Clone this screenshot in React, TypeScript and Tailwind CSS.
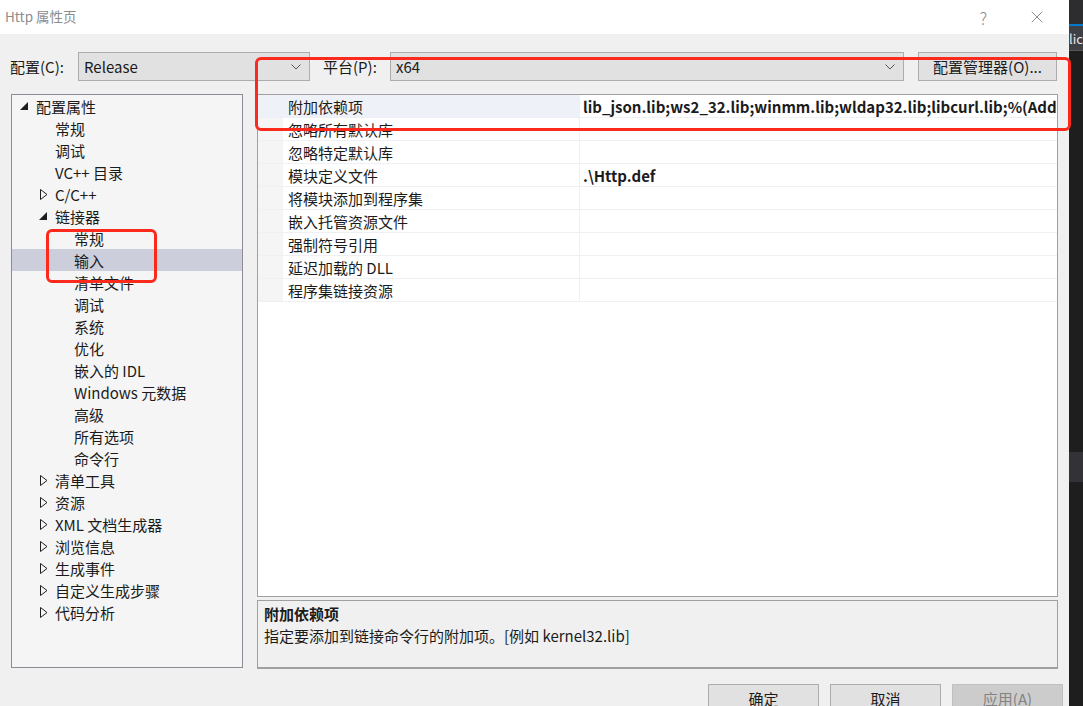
import React from "react";
import { X } from "lucide-react";

type TreeItem = {
  label: string;
  level: number;
  arrow?: "open" | "closed";
  selected?: boolean;
};

const treeItems: TreeItem[] = [
  { label: "配置属性", level: 0, arrow: "open" },
  { label: "常规", level: 1 },
  { label: "调试", level: 1 },
  { label: "VC++ 目录", level: 1 },
  { label: "C/C++", level: 1, arrow: "closed" },
  { label: "链接器", level: 1, arrow: "open" },
  { label: "常规", level: 2 },
  { label: "输入", level: 2, selected: true },
  { label: "清单文件", level: 2 },
  { label: "调试", level: 2 },
  { label: "系统", level: 2 },
  { label: "优化", level: 2 },
  { label: "嵌入的 IDL", level: 2 },
  { label: "Windows 元数据", level: 2 },
  { label: "高级", level: 2 },
  { label: "所有选项", level: 2 },
  { label: "命令行", level: 2 },
  { label: "清单工具", level: 1, arrow: "closed" },
  { label: "资源", level: 1, arrow: "closed" },
  { label: "XML 文档生成器", level: 1, arrow: "closed" },
  { label: "浏览信息", level: 1, arrow: "closed" },
  { label: "生成事件", level: 1, arrow: "closed" },
  { label: "自定义生成步骤", level: 1, arrow: "closed" },
  { label: "代码分析", level: 1, arrow: "closed" },
];

const props: { name: string; value?: string; selected?: boolean }[] = [
  {
    name: "附加依赖项",
    value:
      "lib_json.lib;ws2_32.lib;winmm.lib;wldap32.lib;libcurl.lib;%(AdditionalDependencies)",
    selected: true,
  },
  { name: "忽略所有默认库" },
  { name: "忽略特定默认库" },
  { name: "模块定义文件", value: ".\\Http.def" },
  { name: "将模块添加到程序集" },
  { name: "嵌入托管资源文件" },
  { name: "强制符号引用" },
  { name: "延迟加载的 DLL" },
  { name: "程序集链接资源" },
];

// tree panel starts at x=12, text sits at 36 / 55 / 74
const indent = ["pl-[24px]", "pl-[43px]", "pl-[62px]"];

const Arrow = ({ kind }: { kind: "open" | "closed" }) =>
  kind === "open" ? (
    <svg width="9" height="9" viewBox="0 0 9 9" className="absolute -left-[16px] top-[7px]">
      <polygon points="8,0 8,8 0,8" fill="#1e1e1e" />
    </svg>
  ) : (
    <svg width="8" height="11" viewBox="0 0 8 11" className="absolute -left-[15px] top-[6px]">
      <polygon points="0.5,0.5 7,5.5 0.5,10.5" fill="none" stroke="#1e1e1e" strokeWidth="1" />
    </svg>
  );

const Combo = ({ text, width }: { text: string; width: string }) => (
  <div
    className={`${width} h-[29px] flex items-center justify-between pl-[5px] pr-[8px] bg-[#e1e1e1] border border-[#adadad]`}
  >
    <span>{text}</span>
    <svg width="10" height="6" viewBox="0 0 10 6">
      <polyline points="0.5,0.5 5,5 9.5,0.5" fill="none" stroke="#555" strokeWidth="1" />
    </svg>
  </div>
);

export default function App() {
  return (
    <div
      className="w-[1083px] h-[706px] flex overflow-hidden text-[15px] text-[#1b1b1b] leading-none"
      style={{ fontFamily: '"Noto Sans CJK SC", "Noto Sans", sans-serif' }}
    >
      {/* dialog */}
      <div className="w-[1071px] h-full flex flex-col bg-[#f0f0f0] relative">
        <div className="h-[34px] bg-white flex items-center justify-between shrink-0">
          <span className="pl-[5px] text-[13.5px] text-[#8c8c8c]">Http 属性页</span>
          <div className="flex items-center gap-[40px] pr-[22px] text-[#8c8c8c]">
            <span className="text-[17px] font-light">?</span>
            <X size={20} strokeWidth={1} color="#777" />
          </div>
        </div>

        <div className="flex items-center h-[29px] mt-[18px] shrink-0">
          <span className="w-[78px] pl-[10px]">配置(C):</span>
          <Combo text="Release" width="w-[232px]" />
          <span className="w-[80px] pl-[13px]">平台(P):</span>
          <Combo text="x64" width="w-[514px]" />
          <button className="ml-[14px] w-[139px] h-[29px] bg-[#e1e1e1] border border-[#adadad]">
            配置管理器(O)...
          </button>
        </div>

        <div className="flex mt-[13px] shrink-0">
          {/* tree */}
          <div className="ml-[11px] w-[232px] h-[574px] bg-[#f5f5f5] border border-[#8c8c94]">
            {treeItems.map((t, i) => (
              <div
                key={i}
                className={`h-[22px] flex items-center ${t.selected ? "bg-[#cccedb]" : ""}`}
              >
                <div className={`${indent[t.level]} relative h-full flex items-center`}>
                  {t.arrow && (
                    <span className="relative h-full">
                      <Arrow kind={t.arrow} />
                    </span>
                  )}
                  <span className="whitespace-nowrap">{t.label}</span>
                </div>
              </div>
            ))}
          </div>

          {/* right column */}
          <div className="ml-[14px] w-[801px] flex flex-col">
            <div className="h-[503px] bg-white border border-[#a0a0a0]">
              {props.map((p, i) => (
                <div key={i} className="flex h-[23px] border-b border-[#eef0f4]">
                  <div
                    className={`w-[25px] ${p.selected ? "bg-[#eef2f8]" : "bg-[#f5f5f5]"}`}
                  />
                  <div
                    className={`w-[297px] flex items-center pl-[5px] border-r border-[#eef0f4] ${
                      p.selected ? "bg-[#eef2f8]" : "bg-white"
                    }`}
                  >
                    {p.name}
                  </div>
                  <div className="flex-1 flex items-center pl-[3px] font-bold overflow-hidden whitespace-nowrap">
                    {p.value}
                  </div>
                </div>
              ))}
            </div>
            <div className="mt-[3px] h-[69px] bg-[#f0f0f0] border border-[#a0a0a0] border-b-2 pl-[6px] pt-[5px]">
              <div className="font-bold h-[15px] flex items-center">附加依赖项</div>
              <div className="mt-[7px]">指定要添加到链接命令行的附加项。[例如 kernel32.lib]</div>
            </div>
          </div>
        </div>

        <div className="flex mt-[15px] pl-[708px] gap-[11px] shrink-0">
          <button className="w-[111px] h-[30px] bg-[#e1e1e1] border border-[#adadad] pb-[2px]">
            确定
          </button>
          <button className="w-[111px] h-[30px] bg-[#e1e1e1] border border-[#adadad] pb-[2px]">
            取消
          </button>
          <button className="w-[111px] h-[30px] bg-[#cccccc] border border-[#bfbfbf] text-[#838383] pb-[2px]">
            应用(A)
          </button>
        </div>

        {/* red annotation boxes */}
        <div className="absolute left-[255px] top-[57px] w-[816px] h-[74px] border-[3px] border-[#fb2a1c] rounded-[6px] pointer-events-none" />
        <div className="absolute left-[46px] top-[229px] w-[111px] h-[54px] border-[3px] border-[#fb2a1c] rounded-[6px] pointer-events-none" />
      </div>

      {/* editor behind */}
      <div className="flex-1 h-full bg-[#1e1e1e] flex flex-col">
        <div className="h-[24px] bg-[#2d2d30]" />
        <div className="h-[2px] bg-[#007acc]" />
        <div className="h-[24px] bg-[#3f3f46] text-[#e6e6e6] text-[13px] flex items-center overflow-hidden whitespace-nowrap">
          lic
        </div>
        <div className="h-[1px] bg-[#555]" />
        <div className="flex-1" />
        <div className="h-[30px] bg-[#333337] mb-[224px]" />
      </div>
    </div>
  );
}
